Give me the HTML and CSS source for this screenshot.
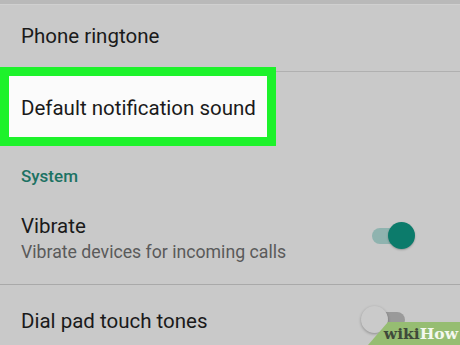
FILE: index.html
```html
<!DOCTYPE html>
<html>
<head>
<meta charset="utf-8">
<link rel="stylesheet" href="styles.css">
</head>
<body>
<div class="screen">
  <div class="topbar"></div>
  <div class="row row-ringtone"><span class="title">Phone ringtone</span></div>
  <div class="row-highlight">
    <div class="highlight"><span class="title">Default notification sound</span></div>
    <div class="divider-right"></div>
  </div>
  <div class="section">System</div>
  <div class="row row-vibrate">
    <div class="texts">
      <span class="title">Vibrate</span>
      <span class="sub">Vibrate devices for incoming calls</span>
    </div>
    <div class="switch on"><div class="track"></div><div class="thumb"></div></div>
  </div>
  <div class="divider"></div>
  <div class="row row-dial">
    <span class="title">Dial pad touch tones</span>
    <div class="switch off"><div class="track"></div><div class="thumb"></div></div>
  </div>
  <div class="watermark"><span class="wiki">wiki</span><span class="how">How</span></div>
</div>
</body>
</html>
```
FILE: styles.css
```css
html, body { margin: 0; padding: 0; }
body { width: 460px; height: 345px; overflow: hidden; background: #c9c9c9; font-family: Roboto, "Noto Sans", sans-serif; }
.screen { position: relative; width: 460px; height: 345px; background: #c9c9c9; overflow: hidden; }
.topbar { height: 4px; background: #b9b9b9; border-bottom: 1px solid #d0d0d0; }
.title { font-size: 20.5px; color: #1a1a1a; line-height: 1; }
.row-ringtone { height: 62px; padding-left: 21px; display: flex; align-items: flex-start; padding-top: 21px; box-sizing: border-box; }
.row-highlight { display: flex; align-items: flex-start; height: 80px; }
.highlight { width: 246px; height: 61px; border: 9px solid #1df22b; background: #fbfbfb; display: flex; align-items: center; padding-left: 12px; box-sizing: content-box; }
.highlight .title { margin-top: 4px; }
.divider-right { flex: 1; height: 1px; background: #b0b0b0; margin-top: 4px; }
.section { padding-left: 21px; color: #1c7263; font-size: 17px; font-weight: 500; height: 48px; padding-top: 21px; box-sizing: border-box; line-height: 1; }
.row-vibrate { display: flex; align-items: flex-start; justify-content: space-between; padding: 21px 44px 0 21px; height: 89px; box-sizing: border-box; }
.texts { display: flex; flex-direction: column; gap: 6px; }
.sub { font-size: 17.7px; color: #5a5a5a; line-height: 1.1; }
.row-vibrate .switch { margin-top: 6px; }
.switch { position: relative; width: 44px; height: 28px; }
.switch .track { position: absolute; left: 0; top: 6px; width: 38px; height: 16px; border-radius: 8px; }
.switch .thumb { position: absolute; top: 0; width: 27px; height: 27px; border-radius: 50%; }
.switch.on .track { background: #8fb3af; }
.switch.on .thumb { left: 16px; background: #0c7b6b; box-shadow: 0 1px 2px rgba(0,0,0,0.25); }
.switch.off .track { background: #9a9a9a; left: 6px; }
.switch.off .thumb { left: 0; background: #cacaca; box-shadow: 0 1px 3px rgba(0,0,0,0.3); }
.divider { height: 1px; background: #a9a9a9; }
.row-dial { display: flex; align-items: center; justify-content: space-between; padding: 0 55px 0 21px; height: 70px; }
.row-dial .title { margin-top: 2px; }
.watermark { position: absolute; right: 0; bottom: 0; width: 92px; height: 23px; background: #96bd72; clip-path: polygon(20px 0, 100% 0, 100% 100%, 0 100%); display: flex; align-items: center; justify-content: flex-end; padding-right: 2px; box-sizing: border-box; font-family: "DejaVu Serif", serif; font-weight: bold; font-size: 15.5px; }
.wiki { color: #3f4a3a; }
.how { color: #f4f8ef; }
```
